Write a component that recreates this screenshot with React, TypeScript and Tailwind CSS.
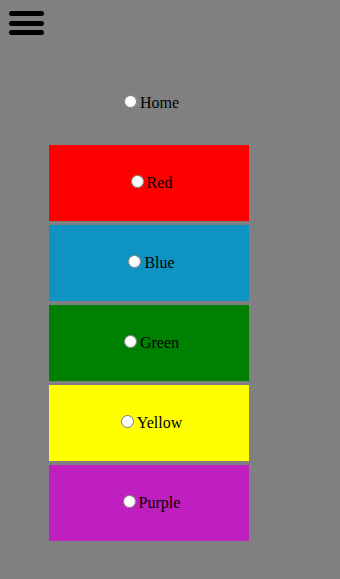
import { useState } from 'react';

const items = [
  { label: 'Home', bg: 'bg-[#808080]' },
  { label: 'Red', bg: 'bg-[#ff0000]' },
  { label: 'Blue', bg: 'bg-[#0e93c3]' },
  { label: 'Green', bg: 'bg-[#008000]' },
  { label: 'Yellow', bg: 'bg-[#ffff00]' },
  { label: 'Purple', bg: 'bg-[#bf1fbf]' },
];

export default function App() {
  const [selected, setSelected] = useState('');

  return (
    <div className="min-h-[579px] bg-[#808080] text-black font-['Liberation_Serif',serif] text-[16px]">
      {/* Menu toggle */}
      <div className="pt-[11px] pl-[9px]">
        <div className="flex w-[35px] flex-col gap-[4.5px]">
          <div className="h-[5px] rounded-full bg-black" />
          <div className="h-[5px] rounded-full bg-black" />
          <div className="h-[5px] rounded-full bg-black" />
        </div>
      </div>

      {/* Color list */}
      <div className="ml-[49px] mt-[30px] flex w-[200px] flex-col gap-[4px]">
        {items.map((item) => (
          <div key={item.label} className={`flex h-[76px] items-center justify-center ${item.bg}`}>
            <label className="leading-normal">
              <input
                type="radio"
                name="color"
                className="ml-[5px] mr-[3px] mt-[3px]"
                checked={selected === item.label}
                onChange={() => setSelected(item.label)}
              />
              {item.label}
            </label>
          </div>
        ))}
      </div>
    </div>
  );
}
